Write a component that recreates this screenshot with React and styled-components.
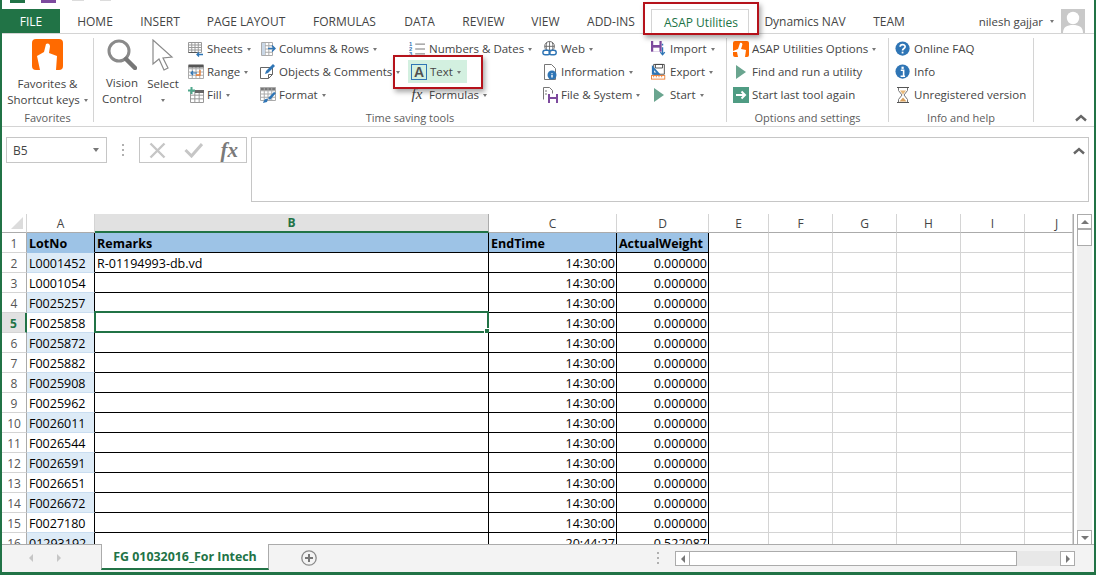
import styled, { createGlobalStyle } from "styled-components";

const GREEN = "#217346";
const COLUMNS = "25px 68px 394px 128px 92px 60px 64px 64px 64px 64px 48px";

const GlobalStyle = createGlobalStyle`
  html, body {
    margin: 0;
    padding: 0;
    background: #fff;
    overflow: hidden;
  }
`;

const Window = styled.div`
  position: relative;
  box-sizing: border-box;
  display: flex;
  flex-direction: column;
  width: 1096px;
  height: 575px;
  overflow: hidden;
  background: #fff;
  border-left: 2px solid ${GREEN};
  border-right: 2px solid ${GREEN};
  border-bottom: 3px solid ${GREEN};
  font-family: "Open Sans", "Liberation Sans", sans-serif;
  font-size: 12px;
  color: #444;
`;

const TitleStrip = styled.div`
  display: flex;
  height: 9px;
  padding-left: 8px;
  gap: 16px;
`;

const TitleChip = styled.div`
  width: ${p => p.$w || 15}px;
  height: ${p => p.$h || 3}px;
  background: ${p => p.$color};
`;

const TabBar = styled.div`
  display: flex;
  align-items: stretch;
  height: 24px;
  border-bottom: 1px solid #d4d4d4;
`;

const Tab = styled.div`
  position: relative;
  display: flex;
  align-items: center;
  justify-content: center;
  box-sizing: border-box;
  width: ${p => p.$w}px;
  height: 24px;
  font-size: 12px;
  color: #444;
  white-space: nowrap;
`;

const FileTab = styled(Tab)`
  background: ${GREEN};
  color: #fff;
  margin-right: 3px;
`;

const ActiveTab = styled(Tab)`
  height: 25px;
  margin: 0 2px;
  padding-left: 2px;
  background: #fff;
  border: 1px solid #d4d4d4;
  border-bottom: 0;
  color: ${GREEN};
`;

const UserBox = styled.div`
  display: flex;
  align-items: center;
  margin-left: auto;
  padding-right: 9px;
  font-size: 11.5px;
  color: #444;
`;

const Avatar = styled.div`
  display: flex;
  width: 24px;
  height: 24px;
  margin-left: 7px;
  background: #c9c9c9;
`;

const Ribbon = styled.div`
  display: flex;
  height: 92px;
  border-bottom: 1px solid #d4d4d4;
`;

const Group = styled.div`
  position: relative;
  box-sizing: border-box;
  display: flex;
  flex-direction: column;
  width: ${p => p.$w}px;
  margin: 4px 0;
  ${p => !p.$last && "border-right: 1px solid #d4d4d4;"}
`;

const GroupBody = styled.div`
  display: flex;
  flex: 1;
  min-height: 0;
  padding-left: ${p => p.$pad || 0}px;
`;

const GroupLabel = styled.div`
  height: 16px;
  margin-bottom: -4px;
  line-height: 16px;
  text-align: center;
  font-size: 11px;
  color: #5c5c5c;
  white-space: nowrap;
`;

const LargeButton = styled.div`
  display: flex;
  flex-direction: column;
  align-items: center;
  width: ${p => p.$w}px;
  height: 68px;
  font-size: 11.5px;
  line-height: 16px;
  text-align: center;
  white-space: nowrap;
`;

const LargeIcon = styled.div`
  display: flex;
  align-items: center;
  justify-content: center;
  height: 33px;
  margin-top: 1px;
  margin-bottom: 5px;
`;

const Column = styled.div`
  display: flex;
  flex-direction: column;
  width: ${p => p.$w}px;
  margin-top: -1px;
  margin-left: ${p => p.$gap || 0}px;
`;

const SmallItem = styled.div`
  display: flex;
  align-items: center;
  gap: ${p => p.$gap ?? 3}px;
  height: 23px;
  padding-left: 1px;
  white-space: nowrap;
  font-size: 11.5px;
`;

const IconBox = styled.div`
  display: flex;
  align-items: center;
  justify-content: center;
  flex: none;
  width: 16px;
  height: 18px;
`;

const TextItem = styled(SmallItem)`
  width: 59px;
  box-sizing: border-box;
  background: #d3f0e0;
  padding-left: 3px;
`;

const LetterIcon = styled.div`
  box-sizing: border-box;
  display: flex;
  align-items: center;
  justify-content: center;
  flex: none;
  width: 16px;
  height: 16px;
  border: 1px solid #2f75b5;
  font-family: "Liberation Sans", sans-serif;
  font-size: 14px;
  font-weight: 700;
  color: #505050;
`;

const FxGlyph = styled.span`
  font-family: "Liberation Serif", serif;
  font-style: italic;
  font-size: ${p => p.$size}px;
  font-weight: ${p => p.$weight || 400};
  color: ${p => p.$color};
  line-height: 1;
`;

const Caret = styled.i`
  display: inline-block;
  width: 0;
  height: 0;
  margin-left: ${p => p.$gap ?? 4}px;
  border-left: 2.5px solid transparent;
  border-right: 2.5px solid transparent;
  border-top: 3px solid #777;
  vertical-align: middle;
`;

const RibbonCollapse = styled.div`
  position: absolute;
  right: 7px;
  bottom: 0;
  display: flex;
`;

const FormulaBar = styled.div`
  display: flex;
  align-items: flex-start;
  height: 87px;
  box-sizing: border-box;
  padding: 10px 0 0 4px;
`;

const NameBox = styled.div`
  box-sizing: border-box;
  display: flex;
  align-items: center;
  justify-content: space-between;
  width: 101px;
  height: 26px;
  padding: 0 7px 0 6px;
  border: 1px solid #c6c6c6;
  font-size: 12px;
  color: #444;
`;

const NameCaret = styled.i`
  width: 0;
  height: 0;
  border-left: 3.5px solid transparent;
  border-right: 3.5px solid transparent;
  border-top: 4px solid #777;
`;

const GripDots = styled.div`
  display: flex;
  flex-direction: column;
  justify-content: center;
  gap: 3px;
  width: 32px;
  height: 26px;
  align-items: center;
`;

const GripDot = styled.i`
  width: 2px;
  height: 2px;
  background: #b0b0b0;
`;

const FormulaButtons = styled.div`
  box-sizing: border-box;
  display: flex;
  align-items: center;
  justify-content: space-between;
  width: 108px;
  height: 26px;
  padding: 0 8px 0 9px;
  border: 1px solid #c6c6c6;
`;

const FormulaInput = styled.div`
  position: relative;
  box-sizing: border-box;
  width: 838px;
  height: 65px;
  margin-left: 4px;
  border: 1px solid #c6c6c6;
  display: flex;
  justify-content: flex-end;
  padding: 9px 3px 0 0;
`;

const SheetArea = styled.div`
  display: flex;
  height: 330px;
`;

const Grid = styled.div`
  width: 1072px;
  height: 330px;
  overflow: hidden;
  border-right: 1px solid #ababab;
  box-sizing: border-box;
`;

const HeaderRow = styled.div`
  display: grid;
  grid-template-columns: ${COLUMNS};
  height: 19px;
`;

const Row = styled.div`
  display: grid;
  grid-template-columns: ${COLUMNS};
  height: 20px;
`;

const Corner = styled.div`
  display: flex;
  align-items: flex-end;
  justify-content: flex-end;
  box-sizing: border-box;
  padding: 0 3px 3px 0;
  border-right: 1px solid #d4d4d4;
  border-bottom: 1px solid #ababab;
`;

const ColHead = styled.div`
  box-sizing: border-box;
  display: flex;
  align-items: center;
  justify-content: center;
  padding-left: ${p => (p.$clipped ? 16 : 0)}px;
  font-size: 12px;
  background: ${p => (p.$active ? "#e1e1e1" : "#fff")};
  color: ${p => (p.$active ? GREEN : "#444")};
  font-weight: ${p => (p.$active ? 700 : 400)};
  border-right: 1px solid ${p => (p.$active ? "#ababab" : "#d4d4d4")};
  border-bottom: ${p => (p.$active ? `2px solid ${GREEN}` : "1px solid #ababab")};
`;

const RowHead = styled.div`
  box-sizing: border-box;
  display: flex;
  align-items: center;
  justify-content: center;
  padding-top: 1px;
  font-size: 12px;
  background: ${p => (p.$active ? "#e1e1e1" : "#fff")};
  color: ${p => (p.$active ? GREEN : "#555")};
  font-weight: ${p => (p.$active ? 700 : 400)};
  border-bottom: 1px solid #d4d4d4;
  border-right: ${p => (p.$active ? `2px solid ${GREEN}` : "1px solid #ababab")};
`;

const Cell = styled.div`
  position: relative;
  box-sizing: border-box;
  display: flex;
  align-items: center;
  justify-content: ${p => (p.$right ? "flex-end" : "flex-start")};
  padding: 2px ${p => (p.$right ? 1 : 2)}px 0;
  font-size: 12.5px;
  font-weight: ${p => (p.$bold ? 700 : 400)};
  color: #000;
  white-space: nowrap;
  background: ${p => p.$fill || "#fff"};
  border-right: 1px solid #000;
  border-bottom: 1px solid #000;
`;

const LotCell = styled(Cell)`
  border-bottom: 1px solid ${p => (p.$fill === "#9dc3e6" ? "#9dc3e6" : "#c9ddf0")};
`;

const EmptyCell = styled.div`
  box-sizing: border-box;
  border-right: 1px solid #d4d4d4;
  border-bottom: 1px solid #d4d4d4;
`;

const Selection = styled.div`
  position: absolute;
  top: -2px;
  left: -1px;
  right: -1px;
  bottom: -1px;
  border: 2px solid ${GREEN};
`;

const FillHandle = styled.div`
  position: absolute;
  right: -4px;
  bottom: -4px;
  width: 5px;
  height: 5px;
  background: ${GREEN};
  border: 1px solid #fff;
`;

const VScroll = styled.div`
  display: flex;
  flex-direction: column;
  width: 15px;
  height: 331px;
  margin-left: 3px;
  background: #f0f0f0;
`;

const ScrollButton = styled.div`
  box-sizing: border-box;
  display: flex;
  align-items: center;
  justify-content: center;
  flex: none;
  width: ${p => p.$w || 15}px;
  height: 15px;
  background: #fff;
  border: 1px solid #ababab;
`;

const VThumb = styled.div`
  box-sizing: border-box;
  height: 17px;
  background: #fff;
  border: 1px solid #ababab;
`;

const VTrack = styled.div`
  flex: 1;
`;

const Arrow = styled.i`
  width: 0;
  height: 0;
  ${p => p.$dir === "up" && "border-left: 4px solid transparent; border-right: 4px solid transparent; border-bottom: 4px solid #777;"}
  ${p => p.$dir === "down" && "border-left: 4px solid transparent; border-right: 4px solid transparent; border-top: 4px solid #777;"}
  ${p => p.$dir === "left" && `border-top: 4px solid transparent; border-bottom: 4px solid transparent; border-right: 4px solid ${p.$color || "#777"};`}
  ${p => p.$dir === "right" && `border-top: 4px solid transparent; border-bottom: 4px solid transparent; border-left: 4px solid ${p.$color || "#777"};`}
`;

const SheetBar = styled.div`
  display: flex;
  align-items: flex-start;
  height: 28px;
  background: #f3f3f3;
  border-top: 1px solid #ababab;
  box-sizing: border-box;
`;

const SheetNav = styled.div`
  box-sizing: border-box;
  display: flex;
  align-items: center;
  justify-content: center;
  gap: 24px;
  width: 99px;
  height: 25px;
  padding-right: 14px;
`;

const SheetTab = styled.div`
  box-sizing: border-box;
  display: flex;
  align-items: center;
  justify-content: center;
  width: 168px;
  height: 26px;
  padding-top: 1px;
  margin-top: -1px;
  background: #fff;
  border-left: 1px solid #ababab;
  border-right: 1px solid #ababab;
  border-bottom: 2px solid ${GREEN};
  font-size: 12.4px;
  font-weight: 700;
  color: ${GREEN};
`;

const AddSheet = styled.div`
  display: flex;
  align-items: center;
  justify-content: center;
  width: 82px;
  height: 25px;
  margin-left: -1px;
`;

const SheetGrip = styled(GripDots)`
  width: 16px;
  height: 25px;
  margin-left: 300px;
`;

const HScroll = styled.div`
  display: flex;
  align-items: stretch;
  height: 15px;
  margin: 6px 0 0 9px;
`;

const HThumb = styled.div`
  box-sizing: border-box;
  width: 327px;
  background: #fff;
  border: 1px solid #ababab;
  border-left: 0;
`;

const HTrack = styled.div`
  width: 43px;
  background: #e8e8e8;
`;

const Callout = styled.div`
  position: absolute;
  box-sizing: border-box;
  left: ${p => p.$x}px;
  top: ${p => p.$y}px;
  width: ${p => p.$w}px;
  height: ${p => p.$h}px;
  border: 2px solid #b5121b;
  box-shadow: 2px 3px 5px rgba(0, 0, 0, 0.35);
  pointer-events: none;
`;

const Grey = "#7f7f7f";
const Blue = "#2f75b5";
const Teal = "#6aa58f";
const Purple = "#7d4a9e";
const Orange = "#ed7d31";

const Ico = ({ children, size = 16, vb = 16 }) => (
  <svg width={size} height={size} viewBox={`0 0 ${vb} ${vb}`} fill="none">
    {children}
  </svg>
);

const Lines = ({ x, y, w, h, nx, ny, color = "#999" }) => {
  const out = [];
  for (let i = 0; i <= nx; i++) {
    const px = x + (w * i) / nx;
    out.push(<path key={`v${i}`} d={`M${px} ${y}v${h}`} stroke={color} strokeWidth="1" />);
  }
  for (let i = 0; i <= ny; i++) {
    const py = y + (h * i) / ny;
    out.push(<path key={`h${i}`} d={`M${x} ${py}h${w}`} stroke={color} strokeWidth="1" />);
  }
  return out;
};

const SheetsIcon = () => (
  <Ico>
    <Lines x={0.5} y={1.5} w={13} h={10} nx={4} ny={4} />
    <path d="M0.5 11.5h9" stroke="#555" />
    <path d="M15 13.5H9M11 11.5l-2 2 2 2" stroke={Blue} strokeWidth="1.3" />
  </Ico>
);
const RangeIcon = () => (
  <Ico>
    <Lines x={0.5} y={1.5} w={15} h={13} nx={4} ny={4} color="#aaa" />
    <rect x="0.5" y="0.5" width="15" height="3" fill="#555" />
    <path d="M3 9h6M5 7L3 9l2 2" stroke={Blue} strokeWidth="1.2" />
    <path d="M12 6v5H8" stroke={Orange} strokeWidth="1.3" />
  </Ico>
);
const FillIcon = () => (
  <Ico>
    <Lines x={2.5} y={4.5} w={13} h={11} nx={3} ny={3} />
    <rect x="7" y="3" width="9" height="3" fill="#666" />
    <path d="M3.5 0v7M0 3.5h7" stroke="#4ea78b" strokeWidth="2" />
  </Ico>
);
const ColumnsIcon = () => (
  <Ico>
    <Lines x={1.5} y={1.5} w={11} h={13} nx={3} ny={4} color="#aaa" />
    <rect x="2" y="2" width="3" height="12" fill="#c9d7e6" />
    <path d="M8 7.5h7M12 4.5l3 3-3 3" stroke={Blue} strokeWidth="1.4" />
  </Ico>
);
const ObjectsIcon = () => (
  <Ico>
    <path d="M0.5 3.5h12v7l-4 4h-8z" stroke="#666" fill="#fff" />
    <path d="M8.5 14.5v-4h4" stroke="#666" />
    <path d="M5 10l1-3 7-7 2 2-7 7z" fill={Blue} />
  </Ico>
);
const FormatIcon = () => (
  <Ico>
    <rect x="0.5" y="0.5" width="15" height="3" fill="#777" />
    <Lines x={0.5} y={0.5} w={15} h={13} nx={4} ny={4} color="#aaa" />
    <path d="M3 16c1-4 3-5 5-4l-1 3zM8 11l6-6 2 1-6 7z" fill={Blue} />
  </Ico>
);
const NumbersIcon = () => (
  <Ico vb={18} size={18}>
    <path d="M7 3.5h11M7 9h11M7 14.5h11" stroke="#666" />
    <text x="0" y="6" fontSize="6.5" fontWeight="700" fontFamily="Liberation Sans" fill={Blue}>1</text>
    <text x="0" y="11.5" fontSize="6.5" fontWeight="700" fontFamily="Liberation Sans" fill={Blue}>2</text>
    <text x="0" y="17" fontSize="6.5" fontWeight="700" fontFamily="Liberation Sans" fill={Blue}>3</text>
  </Ico>
);
const WebIcon = () => (
  <Ico vb={18} size={18}>
    <circle cx="8.5" cy="6" r="5.5" stroke="#666" />
    <path d="M3 6h11M8.5 .5v11M5.5 1.5c-1 3-1 6 0 9M11.5 1.5c1 3 1 6 0 9" stroke="#666" />
    <rect x="1" y="10.5" width="8" height="5" rx="2.5" stroke={Blue} strokeWidth="1.6" fill="#fff" />
    <rect x="8" y="10.5" width="8" height="5" rx="2.5" stroke={Blue} strokeWidth="1.6" fill="none" />
  </Ico>
);
const InformationIcon = () => (
  <Ico>
    <path d="M2.5 .5h7l4 4v11h-11z" stroke="#777" fill="#fff" />
    <circle cx="10" cy="11" r="4.5" fill={Blue} />
    <path d="M10 9v.8M10 10.8v2.7" stroke="#fff" strokeWidth="1.4" />
  </Ico>
);
const FileSystemIcon = () => (
  <Ico>
    <path d="M1.5 .5h6l3 3v3M1.5 .5v12" stroke="#777" />
    <path d="M3 4h2M3 7h2" stroke="#777" />
    <rect x="6" y="7" width="10" height="9" fill={Purple} />
    <rect x="8" y="7" width="6" height="3" fill="#fff" />
    <rect x="8" y="12" width="6" height="4" fill="#fff" />
  </Ico>
);
const ImportIcon = () => (
  <Ico vb={18} size={18}>
    <rect x="0" y="0" width="12" height="12" fill={Purple} />
    <rect x="2.5" y="0" width="7" height="4.5" fill="#fff" />
    <rect x="2.5" y="7.5" width="7" height="4.5" fill="#fff" />
    <path d="M13 3v2M13 7v8M10.5 12.5l2.5 3 2.5-3" stroke={Blue} strokeWidth="1.5" />
  </Ico>
);
const ExportIcon = () => (
  <Ico vb={18} size={18}>
    <path d="M3 .5h12v11h-12z" stroke="#444" fill="#fff" />
    <path d="M5 .5h8v4H5z" stroke="#444" />
    <path d="M1 1v11h10z" fill={Blue} />
    <path d="M3.5 7v2.5h2.5z" fill="#fff" />
    <rect x="0.5" y="13" width="15" height="4" stroke={Orange} fill="#fff" />
    <path d="M3 13v2M6 13v2M9 13v2M12 13v2" stroke={Orange} />
  </Ico>
);
const PlayIcon = () => (
  <Ico>
    <path d="M3 1l10 7-10 7z" fill={Teal} />
  </Ico>
);
const LastToolIcon = () => (
  <Ico>
    <rect width="16" height="16" fill="#4f9c83" />
    <path d="M3 8h9M8.5 4.5L12 8l-3.5 3.5" stroke="#fff" strokeWidth="2" />
  </Ico>
);
const AsapSmallIcon = () => (
  <Ico>
    <rect width="16" height="16" rx="2" fill="#ff6a00" />
    <path d="M0 10l5-2 2-6c2-1 3 1 2 3L8 8l5 1-1 7H5L4 11H0z" fill="#fff" />
  </Ico>
);
const QuestionIcon = () => (
  <Ico vb={18} size={18}>
    <circle cx="8.5" cy="8.5" r="8" fill={Blue} />
    <path d="M5.8 6.6c0-3.4 5.6-3.4 5.6-.2 0 2-2.9 2-2.9 4.2" stroke="#fff" strokeWidth="1.9" />
    <rect x="7.5" y="12" width="2" height="2" fill="#fff" />
  </Ico>
);
const InfoIcon = () => (
  <Ico vb={18} size={18}>
    <circle cx="8.5" cy="8.5" r="8" fill={Blue} />
    <rect x="7.3" y="3" width="2.5" height="2.5" fill="#fff" />
    <path d="M6.5 7h3.2v6.5M6.3 13.7h5" stroke="#fff" strokeWidth="1.8" />
  </Ico>
);
const HourglassIcon = () => (
  <Ico>
    <path d="M2 .5h12M2 15.5h12" stroke="#555" />
    <path d="M3.5 1v2.5L7 8l-3.5 4.5V15M12.5 1v2.5L9 8l3.5 4.5V15" stroke="#777" />
    <path d="M5 3.5h6L8 7.5z" fill="#e8b878" />
    <path d="M4.5 14.5L8 10.5l3.5 4z" fill="#d9a05b" />
  </Ico>
);
const FavoritesIcon = () => (
  <Ico size={32} vb={32}>
    <rect width="31" height="31" rx="4" fill="#ff6a00" />
    <path d="M5 17l7-4 2-8c2-1.500 4 0 4 2.500L17 14l8 3-1 14H8z" fill="#fff" />
  </Ico>
);
const MagnifierIcon = () => (
  <svg width="30" height="31" viewBox="0 0 30 31" fill="none">
    <circle cx="12" cy="12" r="10" stroke="#8a8a8a" strokeWidth="3" fill="#fff" />
    <path d="M19 20l9 9" stroke="#777" strokeWidth="4.500" strokeLinecap="round" />
  </svg>
);
const PointerIcon = () => (
  <svg width="22" height="32" viewBox="0 0 22 32" fill="none">
    <path d="M1 1v24l6-5 5 11 4-2-5-10 9-1z" stroke="#8a8a8a" strokeWidth="1.200" fill="#fff" />
  </svg>
);
const CollapseChevron = () => (
  <svg width="12" height="8" viewBox="0 0 12 8" fill="none">
    <path d="M1 6.500L6 2l5 4.500" stroke="#666" strokeWidth="2.400" />
  </svg>
);
const CrossIcon = () => (
  <svg width="17" height="17" viewBox="0 0 17 17" fill="none">
    <path d="M1.500 1.500l14 14M15.500 1.500l-14 14" stroke="#c6c6c6" strokeWidth="2.400" />
  </svg>
);
const CheckIcon = () => (
  <svg width="19" height="16" viewBox="0 0 19 16" fill="none">
    <path d="M1.500 8l6 6L18 2" stroke="#c6c6c6" strokeWidth="3" />
  </svg>
);
const AddIcon = () => (
  <svg width="16" height="16" viewBox="0 0 16 16" fill="none">
    <circle cx="8" cy="8" r="7.200" stroke="#8a8a8a" strokeWidth="1.300" />
    <path d="M4 8h8M8 4v8" stroke="#777" strokeWidth="2" />
  </svg>
);
const AvatarShape = () => (
  <svg width="24" height="24" viewBox="0 0 24 24">
    <circle cx="12" cy="9" r="6.200" fill="#fff" />
    <path d="M2 24c0-6 4-8 10-8s10 2 10 8z" fill="#fff" />
  </svg>
);
const SelectAllMark = () => (
  <svg width="12" height="12" viewBox="0 0 12 12">
    <path d="M12 0v12H0z" fill="#dcdcdc" />
  </svg>
);

const TABS = [
  ["HOME", 64], ["INSERT", 66], ["PAGE LAYOUT", 106], ["FORMULAS", 91],
  ["DATA", 59], ["REVIEW", 69], ["VIEW", 55], ["ADD-INS", 76],
];

const Small = ({ icon, label, caret = true, gap }) => (
  <SmallItem $gap={gap}>
    <IconBox>{icon}</IconBox>
    <span>
      {label}
      {caret && <Caret />}
    </span>
  </SmallItem>
);

const LOTS = [
  "L0001452", "L0001054", "F0025257", "F0025858", "F0025872", "F0025882", "F0025908",
  "F0025962", "F0026011", "F0026544", "F0026591", "F0026651", "F0026672", "F0027180", "01293192",
];

const HEADS = ["A", "B", "C", "D", "E", "F", "G", "H", "I", "J"];
const EMPTY = [0, 1, 2, 3, 4, 5];

const App = () => (
  <>
    <GlobalStyle />
    <Window>
      <TitleStrip>
        <TitleChip $color={GREEN} />
        <TitleChip $color={Purple} />
        <TitleChip $color="#dcdcdc" $w={12} $h={1} />
        <TitleChip $color="#dcdcdc" $w={11} $h={1} />
      </TitleStrip>

      <TabBar>
        <FileTab $w={58}>FILE</FileTab>
        {TABS.map(([name, w]) => (
          <Tab key={name} $w={w}>{name}</Tab>
        ))}
        <ActiveTab $w={98}>ASAP Utilities</ActiveTab>
        <Tab $w={108}>Dynamics NAV</Tab>
        <Tab $w={60}>TEAM</Tab>
        <UserBox>
          nilesh gajjar
          <Caret $gap={7} />
          <Avatar><AvatarShape /></Avatar>
        </UserBox>
      </TabBar>

      <Ribbon>
        <Group $w={92}>
          <GroupBody>
            <LargeButton $w={91}>
              <LargeIcon><FavoritesIcon /></LargeIcon>
              <span>Favorites &amp;</span>
              <span>Shortcut keys<Caret /></span>
            </LargeButton>
          </GroupBody>
          <GroupLabel>Favorites</GroupLabel>
        </Group>

        <Group $w={633}>
          <GroupBody $pad={6}>
            <LargeButton $w={44}>
              <LargeIcon><MagnifierIcon /></LargeIcon>
              <span>Vision</span>
              <span>Control</span>
            </LargeButton>
            <LargeButton $w={38}>
              <LargeIcon><PointerIcon /></LargeIcon>
              <span>Select</span>
              <span><Caret $gap={0} /></span>
            </LargeButton>
            <Column $w={72} $gap={5}>
              <Small icon={<SheetsIcon />} label="Sheets" />
              <Small icon={<RangeIcon />} label="Range" />
              <Small icon={<FillIcon />} label="Fill" />
            </Column>
            <Column $w={149}>
              <Small icon={<ColumnsIcon />} label="Columns & Rows" />
              <Small icon={<ObjectsIcon />} label="Objects & Comments" />
              <Small icon={<FormatIcon />} label="Format" />
            </Column>
            <Column $w={133}>
              <Small icon={<NumbersIcon />} label="Numbers & Dates" gap={4} />
              <TextItem>
                <LetterIcon>A</LetterIcon>
                <span>Text<Caret /></span>
              </TextItem>
              <Small icon={<FxGlyph $size={15} $color="#444">fx</FxGlyph>} label="Formulas" gap={4} />
            </Column>
            <Column $w={109}>
              <Small icon={<WebIcon />} label="Web" />
              <Small icon={<InformationIcon />} label="Information" />
              <Small icon={<FileSystemIcon />} label="File & System" />
            </Column>
            <Column $w={70}>
              <Small icon={<ImportIcon />} label="Import" />
              <Small icon={<ExportIcon />} label="Export" />
              <Small icon={<PlayIcon />} label="Start" />
            </Column>
          </GroupBody>
          <GroupLabel>Time saving tools</GroupLabel>
        </Group>

        <Group $w={162}>
          <GroupBody $pad={5}>
            <Column $w={150}>
              <Small icon={<AsapSmallIcon />} label="ASAP Utilities Options" />
              <Small icon={<PlayIcon />} label="Find and run a utility" caret={false} />
              <Small icon={<LastToolIcon />} label="Start last tool again" caret={false} />
            </Column>
          </GroupBody>
          <GroupLabel>Options and settings</GroupLabel>
        </Group>

        <Group $w={145}>
          <GroupBody $pad={5}>
            <Column $w={135}>
              <Small icon={<QuestionIcon />} label="Online FAQ" caret={false} />
              <Small icon={<InfoIcon />} label="Info" caret={false} />
              <Small icon={<HourglassIcon />} label="Unregistered version" caret={false} />
            </Column>
          </GroupBody>
          <GroupLabel>Info and help</GroupLabel>
        </Group>

        <Group $w={60} $last>
          <RibbonCollapse><CollapseChevron /></RibbonCollapse>
        </Group>
      </Ribbon>

      <FormulaBar>
        <NameBox>B5<NameCaret /></NameBox>
        <GripDots><GripDot /><GripDot /><GripDot /></GripDots>
        <FormulaButtons>
          <CrossIcon />
          <CheckIcon />
          <FxGlyph $size={21} $weight={700} $color="#7a7a7a">fx</FxGlyph>
        </FormulaButtons>
        <FormulaInput><CollapseChevron /></FormulaInput>
      </FormulaBar>

      <SheetArea>
        <Grid>
          <HeaderRow>
            <Corner><SelectAllMark /></Corner>
            {HEADS.map(h => (
              <ColHead key={h} $active={h === "B"} $clipped={h === "J"}>{h}</ColHead>
            ))}
          </HeaderRow>

          <Row>
            <RowHead>1</RowHead>
            <LotCell $bold $fill="#9dc3e6">LotNo</LotCell>
            <Cell $bold $fill="#9dc3e6">Remarks</Cell>
            <Cell $bold $fill="#9dc3e6">EndTime</Cell>
            <Cell $bold $fill="#9dc3e6">ActualWeight</Cell>
            {EMPTY.map(i => <EmptyCell key={i} />)}
          </Row>

          {LOTS.map((lot, i) => {
            const num = i + 2;
            const last = num === 16;
            return (
              <Row key={lot}>
                <RowHead $active={num === 5}>{num}</RowHead>
                <LotCell $fill={num % 2 === 0 ? "#ddebf7" : "#fff"}>{lot}</LotCell>
                <Cell>
                  {num === 2 && "R-01194993-db.vd"}
                  {num === 5 && <Selection><FillHandle /></Selection>}
                </Cell>
                <Cell $right>{last ? "20:44:27" : "14:30:00"}</Cell>
                <Cell $right>{last ? "0.522087" : "0.000000"}</Cell>
                {EMPTY.map(j => <EmptyCell key={j} />)}
              </Row>
            );
          })}
        </Grid>

        <VScroll>
          <ScrollButton><Arrow $dir="up" /></ScrollButton>
          <VThumb />
          <VTrack />
          <ScrollButton><Arrow $dir="down" /></ScrollButton>
        </VScroll>
      </SheetArea>

      <SheetBar>
        <SheetNav>
          <Arrow $dir="left" $color="#c6c6c6" />
          <Arrow $dir="right" $color="#c6c6c6" />
        </SheetNav>
        <SheetTab>FG 01032016_For Intech</SheetTab>
        <AddSheet><AddIcon /></AddSheet>
        <SheetGrip><GripDot /><GripDot /><GripDot /></SheetGrip>
        <HScroll>
          <ScrollButton><Arrow $dir="left" /></ScrollButton>
          <HThumb />
          <HTrack />
          <ScrollButton><Arrow $dir="right" /></ScrollButton>
        </HScroll>
      </SheetBar>

      <Callout $x={641} $y={2} $w={116} $h={33} />
      <Callout $x={391} $y={55} $w={90} $h={34} />
    </Window>
  </>
);

export default App;
